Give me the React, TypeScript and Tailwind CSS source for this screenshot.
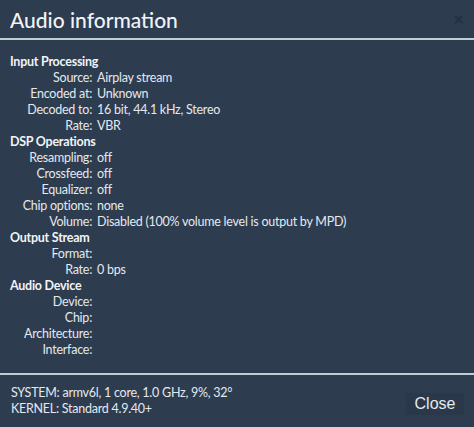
import React from 'react';

type Row = { label: string; value?: string };
type Section = { title: string; rows: Row[] };

const sections: Section[] = [
  {
    title: 'Input Processing',
    rows: [
      { label: 'Source', value: 'Airplay stream' },
      { label: 'Encoded at', value: 'Unknown' },
      { label: 'Decoded to', value: '16 bit, 44.1 kHz, Stereo' },
      { label: 'Rate', value: 'VBR' },
    ],
  },
  {
    title: 'DSP Operations',
    rows: [
      { label: 'Resampling', value: 'off' },
      { label: 'Crossfeed', value: 'off' },
      { label: 'Equalizer', value: 'off' },
      { label: 'Chip options', value: 'none' },
      { label: 'Volume', value: 'Disabled (100% volume level is output by MPD)' },
    ],
  },
  {
    title: 'Output Stream',
    rows: [
      { label: 'Format' },
      { label: 'Rate', value: '0 bps' },
    ],
  },
  {
    title: 'Audio Device',
    rows: [
      { label: 'Device' },
      { label: 'Chip' },
      { label: 'Architecture' },
      { label: 'Interface' },
    ],
  },
];

export default function App() {
  return (
    <div
      className="w-[474px] h-[427px] bg-[#2d3c4e] text-[#e4e9ee] flex flex-col overflow-hidden"
      style={{ fontFamily: 'Lato, "Noto Sans", sans-serif' }}
    >
      {/* Header */}
      <div className="h-[40px] flex items-center justify-between pl-[10px] pr-[10px] border-b-2 border-[#c3ccd6]">
        <h1 className="text-[21px] leading-none text-[#f1f4f7] font-medium">Audio information</h1>
        <span className="text-[18px] leading-none text-[#223040] font-bold">×</span>
      </div>

      {/* Body */}
      <div className="flex-1 pl-[10px] pt-[14px] text-[12.5px] tracking-[-0.25px] leading-[16px]">
        {sections.map((s) => (
          <div key={s.title}>
            <div className="font-bold text-[#f1f4f7]">{s.title}</div>
            {s.rows.map((r, i) => (
              <div key={i} className="flex gap-[5px]">
                <span className="w-[82px] text-right shrink-0">{r.label}:</span>
                <span>{r.value}</span>
              </div>
            ))}
          </div>
        ))}
      </div>

      {/* Footer */}
      <div className="h-[54px] border-t-2 border-[#c3ccd6] flex items-center justify-between pl-[11px] pr-[10px] shrink-0">
        <div className="text-[12.5px] tracking-[-0.25px] leading-[16px]">
          <div>SYSTEM: armv6l, 1 core, 1.0 GHz, 9%, 32°</div>
          <div>KERNEL: Standard 4.9.40+</div>
        </div>
        <button
          className="w-[58px] h-[22px] bg-[#2a384a] text-[16px] text-[#e4e9ee] flex items-center justify-center mt-[6px]"
          style={{ fontFamily: '"Liberation Sans", Arial, sans-serif' }}
        >
          Close
        </button>
      </div>
    </div>
  );
}
